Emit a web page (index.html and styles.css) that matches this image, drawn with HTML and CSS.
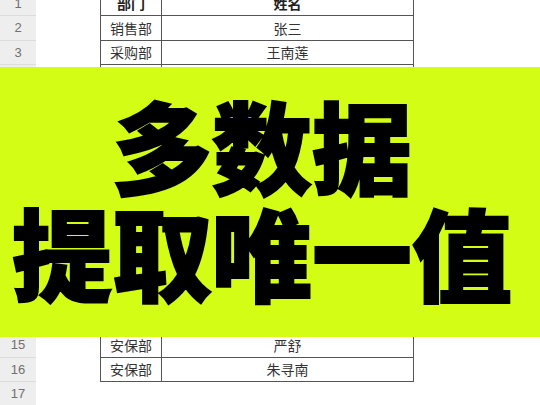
FILE: index.html
```html
<!DOCTYPE html>
<html lang="zh">
<head>
<meta charset="utf-8">
<link rel="stylesheet" href="styles.css">
</head>
<body>
<div class="page">
  <div class="sheet sheet-top">
    <div class="rows shift-top">
      <div class="row"><div class="num">1</div><div class="gap"></div><div class="c1 head">部门</div><div class="c2 head">姓名</div></div>
      <div class="row"><div class="num">2</div><div class="gap"></div><div class="c1">销售部</div><div class="c2">张三</div></div>
      <div class="row"><div class="num">3</div><div class="gap"></div><div class="c1">采购部</div><div class="c2">王南莲</div></div>
      <div class="row"><div class="num">4</div><div class="gap"></div><div class="c1"></div><div class="c2"></div></div>
    </div>
  </div>
  <div class="banner">
    <div class="title">多数据</div>
    <div class="title">提取唯一值</div>
  </div>
  <div class="sheet sheet-bottom">
    <div class="rows shift-bottom">
      <div class="row"><div class="num">15</div><div class="gap"></div><div class="c1">安保部</div><div class="c2">严舒</div></div>
      <div class="row"><div class="num">16</div><div class="gap"></div><div class="c1">安保部</div><div class="c2">朱寻南</div></div>
      <div class="row last"><div class="num">17</div><div class="gap"></div><div class="c1 empty"></div><div class="c2 empty"></div></div>
    </div>
  </div>
</div>
</body>
</html>
```

FILE: styles.css
```css
html, body {
  margin: 0;
  padding: 0;
  background: #ffffff;
}
.page {
  width: 540px;
  height: 405px;
  overflow: hidden;
  font-family: "Liberation Sans", "Noto Sans CJK SC", sans-serif;
}
.sheet {
  overflow: hidden;
  background: #ffffff;
}
.sheet-top { height: 67px; }
.sheet-bottom { height: 68px; }
.shift-top { margin-top: -8.5px; }
.shift-bottom { margin-top: -4px; }
.row {
  display: grid;
  grid-template-columns: 36px 64px 61px 253px;
  height: 24.5px;
}
.num {
  background: #eeeeee;
  border-bottom: 1px solid #dcdcdc;
  box-sizing: border-box;
  color: #707070;
  font-size: 13px;
  display: flex;
  align-items: center;
  justify-content: center;
}
.c1, .c2 {
  box-sizing: border-box;
  border-bottom: 1.5px solid #555555;
  border-left: 1.5px solid #555555;
  display: flex;
  align-items: center;
  justify-content: center;
  font-family: "Noto Sans CJK SC", sans-serif;
  font-size: 14px;
  color: #333333;
}
.c2 { border-right: 1.5px solid #555555; }
.head { font-weight: 700; color: #222222; }
.last .c1, .last .c2 { border: none; }
.banner {
  height: 270px;
  background: #d4fd15;
  box-sizing: border-box;
  padding-top: 23px;
  padding-right: 16px;
  display: flex;
  flex-direction: column;
  align-items: center;
}
.title {
  font-family: "Noto Sans CJK SC", sans-serif;
  font-weight: 900;
  font-size: 100px;
  line-height: 107px;
  color: #000000;
  -webkit-text-stroke: 2px #000000;
  white-space: nowrap;
}
```
